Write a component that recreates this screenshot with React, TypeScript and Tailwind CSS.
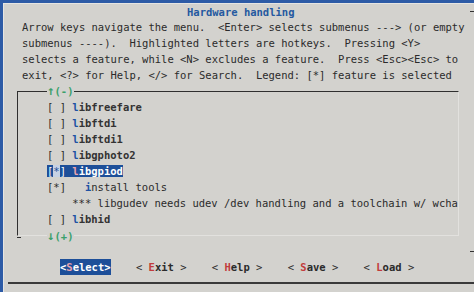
const items = [
  { mark: "[ ] ", key: "l", rest: "ibfreefare", bold: true },
  { mark: "[ ] ", key: "l", rest: "ibftdi", bold: true },
  { mark: "[ ] ", key: "l", rest: "ibftdi1", bold: true },
  { mark: "[ ] ", key: "l", rest: "ibgphoto2", bold: true },
  { mark: "[*] ", key: "l", rest: "ibgpiod", selected: true },
  { mark: "[*]   ", key: "i", rest: "nstall tools" },
  { comment: "    *** libgudev needs udev /dev handling and a toolchain w/ wcha" },
  { mark: "[ ] ", key: "l", rest: "ibhid", bold: true },
];

const help = [
  "Arrow keys navigate the menu.  <Enter> selects submenus ---> (or empty",
  "submenus ----).  Highlighted letters are hotkeys.  Pressing <Y>",
  "selects a feature, while <N> excludes a feature.  Press <Esc><Esc> to",
  "exit, <?> for Help, </> for Search.  Legend: [*] feature is selected",
];

const buttons = [
  { key: "S", rest: "elect", selected: true },
  { key: "E", rest: "xit" },
  { key: "H", rest: "elp" },
  { key: "S", rest: "ave" },
  { key: "L", rest: "oad" },
];

function Item({ item }: { item: (typeof items)[number] }) {
  if (item.comment) {
    return <div className="h-4 leading-4">{item.comment}</div>;
  }
  if (item.selected) {
    return (
      <div className="h-4 leading-4">
        <span className="bg-[#1d4f99] text-white">
          [<span className="bg-[#c6d1e4] text-[#1d4f99]">*</span>]{" "}
          <span className="font-bold text-[#eaa3ae]">{item.key}</span>
          <span className="font-bold">{item.rest}</span>
        </span>
      </div>
    );
  }
  return (
    <div className="h-4 leading-4">
      {item.mark}
      <span className="font-bold text-[#1f52a3]">{item.key}</span>
      <span className={item.bold ? "font-bold text-[#333]" : ""}>{item.rest}</span>
    </div>
  );
}

// scroll indicator sitting on the box border
function Scroll({ arrow, sign, pos }: { arrow: string; sign: string; pos: string }) {
  return (
    <span className={`absolute ${pos} left-[29px] h-4 leading-4 bg-[#d3d2ce] text-[#3aa06b] font-bold`}>
      <span className="text-[12.5px] leading-4">{arrow}</span>({sign})
    </span>
  );
}

export default function App() {
  return (
    <div className="w-[474px] h-[292px] overflow-hidden bg-[#2d5ba6] pt-[3px] pl-[3px] font-['DejaVu_Sans_Mono',monospace] text-[10.5px] text-[#2b2b2b] whitespace-pre">
      <div className="h-[289px] bg-[#d3d2ce] border-t border-l border-[#e6e5e2] flex flex-col">
        {/* title */}
        <div className="h-[15px] leading-[14px] flex items-center">
          <span className="pl-[183px] font-bold text-[#2559a0]">Hardware handling</span>
          <span className="ml-auto w-[4px] h-px bg-[#333]" />
        </div>

        {/* help text */}
        <div className="pl-[18px]">
          {help.map((line) => (
            <div key={line} className="h-4 leading-4">
              {line}
            </div>
          ))}
        </div>

        {/* menu box */}
        <div className="relative mt-[8px] ml-[13px] w-[442px] border-t border-l border-[#2f2f2f] border-b border-r border-b-[#e2e1de] border-r-[#e2e1de] pt-[7px] pb-[8px] pl-[29px]">
          <Scroll arrow="↑" sign="-" pos="-top-[9px]" />
          {items.map((item, i) => (
            <Item key={i} item={item} />
          ))}
          <Scroll arrow="↓" sign="+" pos="-bottom-[9px]" />
          <span className="absolute -bottom-[3px] -left-px w-[4px] h-px bg-[#2f2f2f]" />
        </div>

        {/* separator */}
        <div className="mt-[7px] h-4 flex items-center">
          <span className="ml-auto w-[4px] h-px bg-[#333]" />
        </div>

        {/* buttons */}
        <div className="h-4 leading-4 pl-[56px] flex gap-[25.3px]">
          {buttons.map((b) =>
            b.selected ? (
              <span key={b.rest} className="bg-[#1d4f99] text-white font-bold">
                {"<"}
                <span className="text-[#eaa3ae]">{b.key}</span>
                {b.rest + ">"}
              </span>
            ) : (
              <span key={b.rest}>
                {"< "}
                <span className="font-bold text-[#c23b3b]">{b.key}</span>
                <span className="font-bold">{b.rest}</span>
                {" >"}
              </span>
            )
          )}
        </div>

        <div className="mt-[7px] ml-[4px] h-[2px] bg-[#3a3a3a]" />
      </div>
    </div>
  );
}
